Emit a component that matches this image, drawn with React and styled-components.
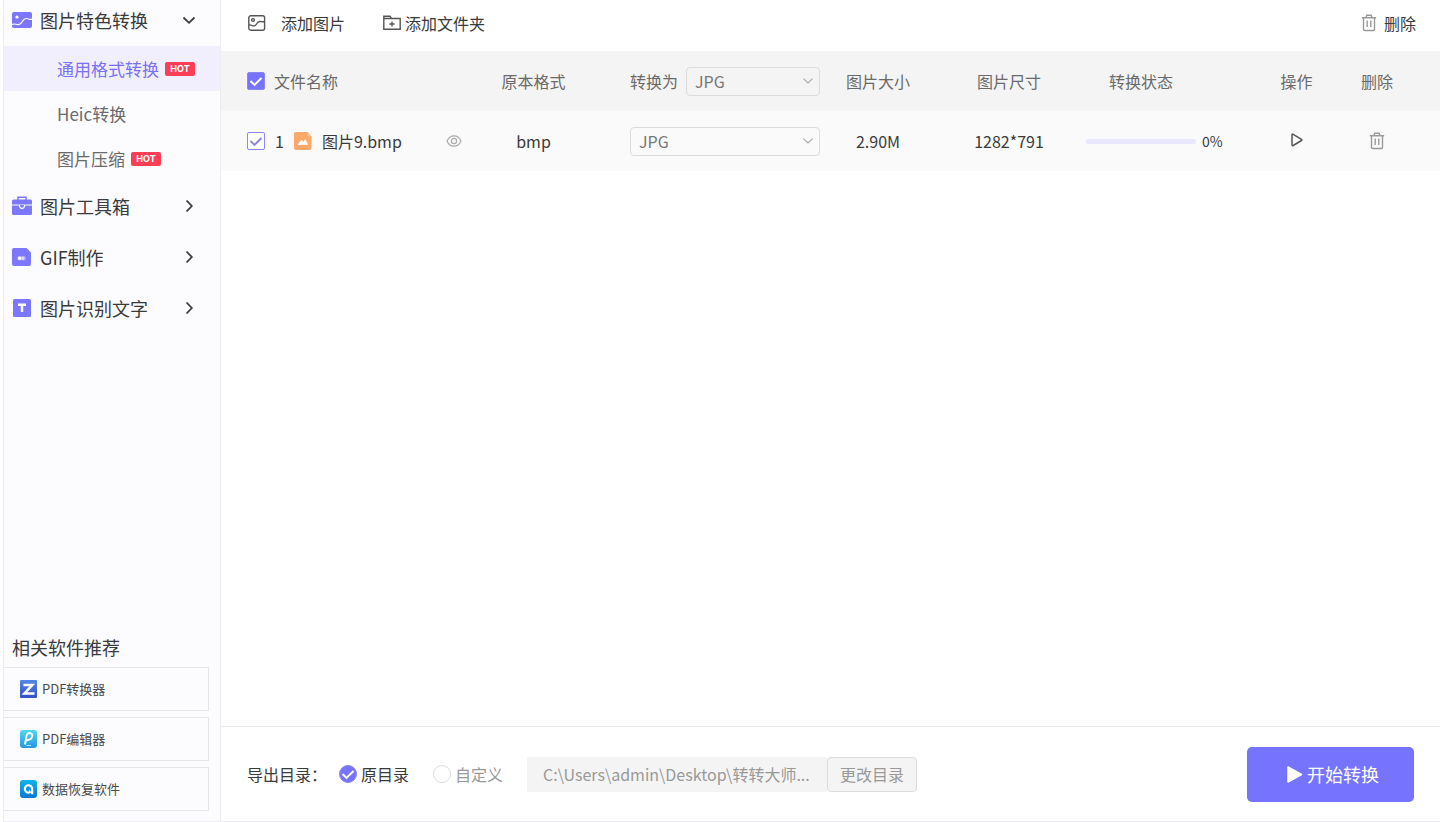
import React, { useState } from 'react';
import styled, { createGlobalStyle } from 'styled-components';

const GlobalStyle = createGlobalStyle`
  * {
    box-sizing: border-box;
  }

  body {
    margin: 0;
    background: #fff;
    color: #3a3a3a;
    font-family: "Noto Sans CJK SC", sans-serif;
    font-size: 16px;
    line-height: 24px;
  }

  button, input, select {
    font: inherit;
    color: inherit;
  }

  svg {
    display: block;
    flex: none;
  }
`;

const Shell = styled.div`
  display: flex;
  min-height: 100vh;
  padding-left: 3px;
`;

const Sidebar = styled.aside`
  width: 218px;
  flex: none;
  display: flex;
  flex-direction: column;
  background: #fcfcff;
  border: solid #ececf2;
  border-width: 0 1px 1px;
`;

const Nav = styled.nav`
  display: flex;
  flex-direction: column;
  flex: 1;
`;

const GroupButton = styled.button`
  display: flex;
  align-items: center;
  gap: 8px;
  width: 100%;
  height: ${props => props.$open ? '46px' : '51px'};
  padding: 0 24px ${props => props.$open ? '6px' : '2px'} 8px;
  border: none;
  background: none;
  font-size: 18px;
  text-align: left;
  cursor: pointer;

  & span {
    flex: 1;
  }
`;

const SubLink = styled.a`
  display: flex;
  align-items: center;
  gap: 6px;
  height: 45px;
  padding-left: 53px;
  font-size: 17px;
  text-decoration: none;
  color: ${props => props.$active ? '#7a70f5' : '#6a6a6a'};
  background: ${props => props.$active ? '#f1effe' : 'transparent'};
`;

const Hot = styled.span`
  width: 30px;
  height: 14px;
  border-radius: 2px;
  background: #f93e55;
  color: #fff;
  font: 700 9px/14px Inter, sans-serif;
  text-align: center;
`;

const Related = styled.section`
  display: grid;
  gap: 6px;
  padding: 0 11px 10px 0;
`;

const RelatedTitle = styled.h2`
  margin: 0;
  padding: 0 0 2px 8px;
  font-size: 18px;
  font-weight: 400;
  line-height: 24px;
`;

const RelatedLink = styled.a`
  display: flex;
  align-items: center;
  gap: 5px;
  height: 44px;
  padding-left: 16px;
  border: solid #e6e6ea;
  border-width: 1px 1px 1px 0;
  color: #4a4a4a;
  font-size: 13px;
  text-decoration: none;
`;

const Main = styled.main`
  flex: 1;
  min-width: 0;
  display: flex;
  flex-direction: column;
`;

const Toolbar = styled.header`
  display: flex;
  align-items: center;
  justify-content: space-between;
  height: 51px;
  padding: 0 24px 6px 27px;
`;

const ToolGroup = styled.div`
  display: flex;
  gap: 38px;
`;

const ToolButton = styled.button`
  display: flex;
  align-items: center;
  gap: ${props => props.$gap || 4}px;
  padding: 0;
  border: none;
  background: none;
  cursor: pointer;
`;

const Table = styled.table`
  width: 100%;
  table-layout: fixed;
  border-collapse: collapse;
  text-align: center;

  & th, & td {
    height: 60px;
    padding: 0;
    font-weight: 400;
  }

  & thead {
    background: #f4f4f4;
    color: #6a6a6a;
  }

  & tbody {
    background: #fafafa;
  }
`;

const Col = styled.col`
  width: ${props => props.$width ? `${props.$width}px` : 'auto'};
`;

const NameCell = styled.div`
  display: flex;
  align-items: center;
  gap: ${props => props.$gap || 9}px;
  padding: 0 3px 0 26px;

  & > button {
    margin-left: auto;
  }
`;

const FormatCell = styled.div`
  display: flex;
  align-items: center;
  gap: 8px;
  width: 190px;
  margin-left: 28px;
`;

const StatusCell = styled.div`
  display: flex;
  align-items: center;
  gap: 6px;
  font-size: 14px;
`;

const StatusHead = styled.div`
  width: 110px;
`;

const LastCell = styled.div`
  display: flex;
  justify-content: center;
  padding-right: 29px;
`;

const Progress = styled.div`
  width: 110px;
  height: 5px;
  border-radius: 3px;
  background: #e9e7fd;
  overflow: hidden;
`;

const ProgressFill = styled.div`
  height: 100%;
  background: #7673ff;
`;

const IconButton = styled.button`
  display: inline-flex;
  padding: 0;
  border: none;
  background: none;
  cursor: pointer;
`;

const CheckWrap = styled.span`
  display: grid;
  flex: none;

  & > * {
    grid-area: 1 / 1;
  }

  & svg {
    pointer-events: none;
  }
`;

const CheckInput = styled.input`
  appearance: none;
  width: 18px;
  height: 18px;
  margin: 0;
  border: 1px solid ${props => props.$filled || props.type === 'checkbox' ? '#8a86f5' : '#ddd'};
  border-radius: ${props => props.type === 'radio' ? '50%' : '2px'};
  background: ${props => props.$filled ? '#7673ff' : '#fff'};
`;

const SelectWrap = styled.div`
  display: grid;
  flex: 1;
  align-items: center;

  & > * {
    grid-area: 1 / 1;
  }

  & svg {
    justify-self: end;
    margin-right: 7px;
    pointer-events: none;
  }
`;

const Select = styled.select`
  appearance: none;
  width: 100%;
  height: 29px;
  padding: 0 8px;
  border: 1px solid #dcdcdc;
  border-radius: 4px;
  background: transparent;
  color: #777;
`;

const Footer = styled.footer`
  display: flex;
  align-items: center;
  height: 96px;
  margin-top: auto;
  padding: 0 26px;
  border: solid #ececf0;
  border-width: 1px 0;
`;

const RadioLabel = styled.label`
  display: flex;
  align-items: center;
  gap: 4px;
  margin-right: 24px;
  color: ${props => props.$muted ? '#999' : '#3a3a3a'};
`;

const FooterTitle = styled.span`
  width: 92px;
`;

const PathInput = styled.input`
  width: 300px;
  min-width: 0;
  height: 35px;
  padding: 0 16px;
  border: none;
  background: #f4f4f4;
  color: #999;
`;

const ChangeButton = styled.button`
  width: 90px;
  height: 35px;
  flex: none;
  padding: 0;
  border: 1px solid #dcdcdc;
  border-radius: 4px;
  background: #f4f4f4;
  color: #999;
`;

const StartButton = styled.button`
  display: flex;
  align-items: center;
  justify-content: center;
  gap: 4px;
  width: 167px;
  height: 55px;
  flex: none;
  margin-left: auto;
  padding: 0 0 0 5px;
  border: none;
  border-radius: 5px;
  background: #7673ff;
  color: #fff;
  font-size: 18px;
  cursor: pointer;
`;

const Chevron = ({ open }) => (
  <svg width="14" height="14" viewBox="0 0 14 14" fill="none" stroke="#3a3a3a" strokeWidth="1.8">
    <path d={open ? 'M1.5 4.5 7 9.8l5.5-5.3' : 'M4.5 1.5 9.8 7l-5.3 5.5'} />
  </svg>
);

const SelectArrow = () => (
  <svg width="10" height="6" viewBox="0 0 10 6" fill="none" stroke="#aaa" strokeWidth="1.1">
    <path d="M.5.7 5 5 9.5.7" />
  </svg>
);

const PictureIcon = () => (
  <svg width="20" height="16" viewBox="0 0 20 16">
    <rect width="20" height="16" rx="2" fill="#7d78fb" />
    <circle cx="5" cy="5" r="1.6" fill="#fff" />
    <path d="M0 12.5c3-1.500 4 .5 7 0 3.500-.7 3.500-6 7-6 2.500 0 3.500 1.500 6 .5" fill="none" stroke="#fff" strokeWidth="1.2" />
  </svg>
);

const ToolboxIcon = () => (
  <svg width="20" height="19" viewBox="0 0 20 19">
    <path d="M6 4V1.300h8V4" fill="none" stroke="#7d78fb" strokeWidth="1.5" />
    <path d="M1.500 3.500h17A1.500 1.500 0 0 1 20 5v3.500H0V5a1.500 1.500 0 0 1 1.500-1.500z" fill="#7d78fb" />
    <path d="M0 9.500h20v8a1.500 1.500 0 0 1-1.500 1.500h-17A1.500 1.500 0 0 1 0 17.500z" fill="#7d78fb" />
    <path d="M7.500 9v.8a2.500 2.500 0 0 0 5 0V9" fill="#7d78fb" stroke="#fff" strokeWidth="1.2" />
  </svg>
);

const GifIcon = () => (
  <svg width="20" height="18" viewBox="0 0 20 18">
    <path d="M2 0h12.500L19 4.500V16a2 2 0 0 1-2 2H2a2 2 0 0 1-2-2V2a2 2 0 0 1 2-2z" fill="#7d78fb" />
    <rect x="5.500" y="8.300" width="8" height="4" rx="1.200" fill="#b7b3fd" />
    <circle cx="7.700" cy="10.300" r="1.700" fill="#fff" />
    <path d="M11 8.800v3" stroke="#fff" />
  </svg>
);

const TextIcon = () => (
  <svg width="20" height="18" viewBox="0 0 20 18">
    <rect x="1" width="18" height="18" rx="1.500" fill="#7d78fb" />
    <path d="M6 5.700h8M10 5.500V13" stroke="#fff" strokeWidth="2.400" />
  </svg>
);

const AddImageIcon = () => (
  <svg width="18" height="16" viewBox="0 0 18 16" fill="none" stroke="#555" strokeWidth="1.4">
    <rect x=".8" y=".8" width="15.800" height="14.400" rx="2" />
    <circle cx="5" cy="5" r="1.400" />
    <path d="M1 10c2-.8 3 1.200 5.500.8 2.500-.5 2-4 5-4.300 2-.2 3 .8 5 0" />
  </svg>
);

const AddFolderIcon = () => (
  <svg width="18" height="16" viewBox="0 0 18 16" fill="none" stroke="#555" strokeWidth="1.4">
    <path d="M.8 14.300V1.200H7l1.500 2.300h8.700v10.800zM.8 3.500h8M9 6.400v5.200M6.400 9h5.200" />
  </svg>
);

const TrashIcon = () => (
  <svg width="16" height="18" viewBox="0 0 16 18" fill="none" stroke="#999" strokeWidth="1.4">
    <path d="M.8 3.700h14.400M5 3.500 5.800 1.300h4.400l.8 2.200M2.500 3.700v11.600a1.200 1.200 0 0 0 1.200 1.200h8.600a1.200 1.200 0 0 0 1.200-1.200V3.700M6.200 6.500v6.500M9.800 6.500v6.500" />
  </svg>
);

const FileIcon = () => (
  <svg width="18" height="18" viewBox="0 0 18 18">
    <path d="M2 0h11.500L17.500 4.500V16a2 2 0 0 1-2 2H2a2 2 0 0 1-2-2V2a2 2 0 0 1 2-2z" fill="#fca868" />
    <path d="M13.500 0 17.500 4.500h-3a1 1 0 0 1-1-1z" fill="#fdc293" />
    <path d="M4 12.500 7.500 8l2 2.300 1.800-2.800 2.400 5z" fill="#fff" stroke="#fff" strokeWidth=".6" strokeLinejoin="round" />
  </svg>
);

const EyeIcon = () => (
  <svg width="16" height="12" viewBox="0 0 16 12" fill="none" stroke="#aaa" strokeWidth="1.2">
    <path d="M1 6C2.500 2.500 5 .8 8 .8S13.500 2.500 15 6C13.500 9.500 11 11.200 8 11.200S2.500 9.500 1 6z" />
    <circle cx="8" cy="6" r="2.600" />
  </svg>
);

const PlayIcon = () => (
  <svg width="14" height="16" viewBox="0 0 14 16" fill="none" stroke="#555" strokeWidth="1.5" strokeLinejoin="round">
    <path d="M2 3q0-1.300 1.200-.7l8.300 5q.8.600 0 1.200l-8.300 5Q2 14 2 12.800z" />
  </svg>
);

const PlaySolidIcon = () => (
  <svg width="16" height="18" viewBox="0 0 16 18" fill="#fff" stroke="#fff" strokeWidth="1.5" strokeLinejoin="round">
    <path d="M1 2v15l13.500-7.500z" />
  </svg>
);

const ConverterLogo = () => (
  <svg width="17" height="18" viewBox="0 0 17 18">
    <defs>
      <linearGradient id="converter" x1="0" y1="0" x2="0" y2="1">
        <stop offset="0" stopColor="#5288e4" />
        <stop offset="1" stopColor="#3451c4" />
      </linearGradient>
    </defs>
    <rect width="17" height="18" rx="1" fill="url(#converter)" />
    <path d="M3.500 5h8.700L4.500 13.500h10" fill="none" stroke="#fff" strokeWidth="2.600" />
  </svg>
);

const EditorLogo = () => (
  <svg width="17" height="18" viewBox="0 0 17 18">
    <defs>
      <linearGradient id="editor" x1="0" y1="0" x2="0" y2="1">
        <stop offset="0" stopColor="#4fd8f0" />
        <stop offset="1" stopColor="#2596e4" />
      </linearGradient>
    </defs>
    <rect width="17" height="18" rx="3" fill="url(#editor)" />
    <path d="M5 14.500 6.500 6Q7 3 9.500 3q3.300.2 2.700 3.400Q11.500 10 6.500 10.200" fill="none" stroke="#fff" strokeWidth="1.900" />
    <path d="M6.500 15.500h4.500" stroke="#bfeafa" />
  </svg>
);

const RecoveryLogo = () => (
  <svg width="17" height="18" viewBox="0 0 17 18">
    <defs>
      <linearGradient id="recovery" x1="0" y1="0" x2="0" y2="1">
        <stop offset="0" stopColor="#12b3ea" />
        <stop offset="1" stopColor="#0a78d4" />
      </linearGradient>
    </defs>
    <rect width="17" height="18" rx="3" fill="url(#recovery)" />
    <path d="M9.500 12.500A3.700 3.700 0 1 1 12.200 9v5.300" fill="none" stroke="#fff" strokeWidth="2.100" />
    <path d="M9 9.500v3.500h3z" fill="#fff" />
  </svg>
);

const groups = [
  { label: '图片工具箱', icon: <ToolboxIcon /> },
  { label: 'GIF制作', icon: <GifIcon /> },
  { label: '图片识别文字', icon: <TextIcon /> },
];

const subItems = [
  { label: '通用格式转换', hot: true, active: true },
  { label: 'Heic转换' },
  { label: '图片压缩', hot: true },
];

const related = [
  { label: 'PDF转换器', icon: <ConverterLogo /> },
  { label: 'PDF编辑器', icon: <EditorLogo /> },
  { label: '数据恢复软件', icon: <RecoveryLogo /> },
];

const files = [
  { name: '图片9.bmp', type: 'bmp', size: '2.90M', dimensions: '1282*791', progress: 0 },
];

const Check = ({ filled, color, ...props }) => (
  <CheckWrap>
    <CheckInput $filled={filled} {...props} />
    {props.checked && (
      <svg width="18" height="18" viewBox="0 0 18 18" fill="none" stroke={color || '#fff'} strokeWidth="2">
        <path d="m3.500 9 4 3.900L14.500 6" />
      </svg>
    )}
  </CheckWrap>
);

const FormatSelect = ({ label, value, onChange }) => (
  <SelectWrap>
    <Select aria-label={label} value={value} onChange={e => onChange(e.target.value)}>
      <option>JPG</option>
      <option>PNG</option>
      <option>BMP</option>
    </Select>
    <SelectArrow />
  </SelectWrap>
);

const App = () => {
  const [format, setFormat] = useState('JPG');
  const [checked, setChecked] = useState(true);
  const [folder, setFolder] = useState('source');

  const toggle = () => setChecked(!checked);

  return (
    <>
      <GlobalStyle />
      <Shell>
        <Sidebar>
          <Nav>
            <GroupButton $open>
              <PictureIcon />
              <span>图片特色转换</span>
              <Chevron open />
            </GroupButton>
            {subItems.map(item => (
              <SubLink key={item.label} href="#" $active={item.active}>
                {item.label}
                {item.hot && <Hot>HOT</Hot>}
              </SubLink>
            ))}
            {groups.map(group => (
              <GroupButton key={group.label}>
                {group.icon}
                <span>{group.label}</span>
                <Chevron />
              </GroupButton>
            ))}
          </Nav>
          <Related>
            <RelatedTitle>相关软件推荐</RelatedTitle>
            {related.map(item => (
              <RelatedLink key={item.label} href="#">
                {item.icon}
                {item.label}
              </RelatedLink>
            ))}
          </Related>
        </Sidebar>
        <Main>
          <Toolbar>
            <ToolGroup>
              <ToolButton $gap={15}><AddImageIcon />添加图片</ToolButton>
              <ToolButton><AddFolderIcon />添加文件夹</ToolButton>
            </ToolGroup>
            <ToolButton $gap={7}><TrashIcon />删除</ToolButton>
          </Toolbar>
          <Table>
            <colgroup>
              <Col />
              <Col $width={137} />
              <Col $width={222} />
              <Col $width={108} />
              <Col $width={154} />
              <Col $width={164} />
              <Col $width={93} />
              <Col $width={97} />
            </colgroup>
            <thead>
              <tr>
                <th>
                  <NameCell>
                    <Check type="checkbox" aria-label="文件名称" filled checked={checked} onChange={toggle} />
                    文件名称
                  </NameCell>
                </th>
                <th>原本格式</th>
                <th>
                  <FormatCell>
                    转换为
                    <FormatSelect label="转换为" value={format} onChange={setFormat} />
                  </FormatCell>
                </th>
                <th>图片大小</th>
                <th>图片尺寸</th>
                <th><StatusHead>转换状态</StatusHead></th>
                <th>操作</th>
                <th><LastCell>删除</LastCell></th>
              </tr>
            </thead>
            <tbody>
              {files.map((file, i) => (
                <tr key={file.name}>
                  <td>
                    <NameCell $gap={10}>
                      <Check type="checkbox" aria-label={file.name} color="#8a86e0" checked={checked} onChange={toggle} />
                      <span>{i + 1}</span>
                      <FileIcon />
                      <span>{file.name}</span>
                      <IconButton aria-label="预览"><EyeIcon /></IconButton>
                    </NameCell>
                  </td>
                  <td>{file.type}</td>
                  <td>
                    <FormatCell>
                      <FormatSelect label="转换为" value={format} onChange={setFormat} />
                    </FormatCell>
                  </td>
                  <td>{file.size}</td>
                  <td>{file.dimensions}</td>
                  <td>
                    <StatusCell>
                      <Progress role="progressbar" aria-label="转换状态" aria-valuenow={file.progress}>
                        <ProgressFill style={{ width: `${file.progress}%` }} />
                      </Progress>
                      {file.progress}%
                    </StatusCell>
                  </td>
                  <td><IconButton aria-label="开始"><PlayIcon /></IconButton></td>
                  <td>
                    <LastCell>
                      <IconButton aria-label="删除"><TrashIcon /></IconButton>
                    </LastCell>
                  </td>
                </tr>
              ))}
            </tbody>
          </Table>
          <Footer>
            <FooterTitle>导出目录：</FooterTitle>
            <RadioLabel>
              <Check
                type="radio"
                name="folder"
                filled={folder === 'source'}
                checked={folder === 'source'}
                onChange={() => setFolder('source')}
              />
              原目录
            </RadioLabel>
            <RadioLabel $muted>
              <Check
                type="radio"
                name="folder"
                filled={folder === 'custom'}
                checked={folder === 'custom'}
                onChange={() => setFolder('custom')}
              />
              自定义
            </RadioLabel>
            <PathInput aria-label="导出目录" readOnly value="C:\Users\admin\Desktop\转转大师..." />
            <ChangeButton>更改目录</ChangeButton>
            <StartButton><PlaySolidIcon />开始转换</StartButton>
          </Footer>
        </Main>
      </Shell>
    </>
  );
};

export default App;
